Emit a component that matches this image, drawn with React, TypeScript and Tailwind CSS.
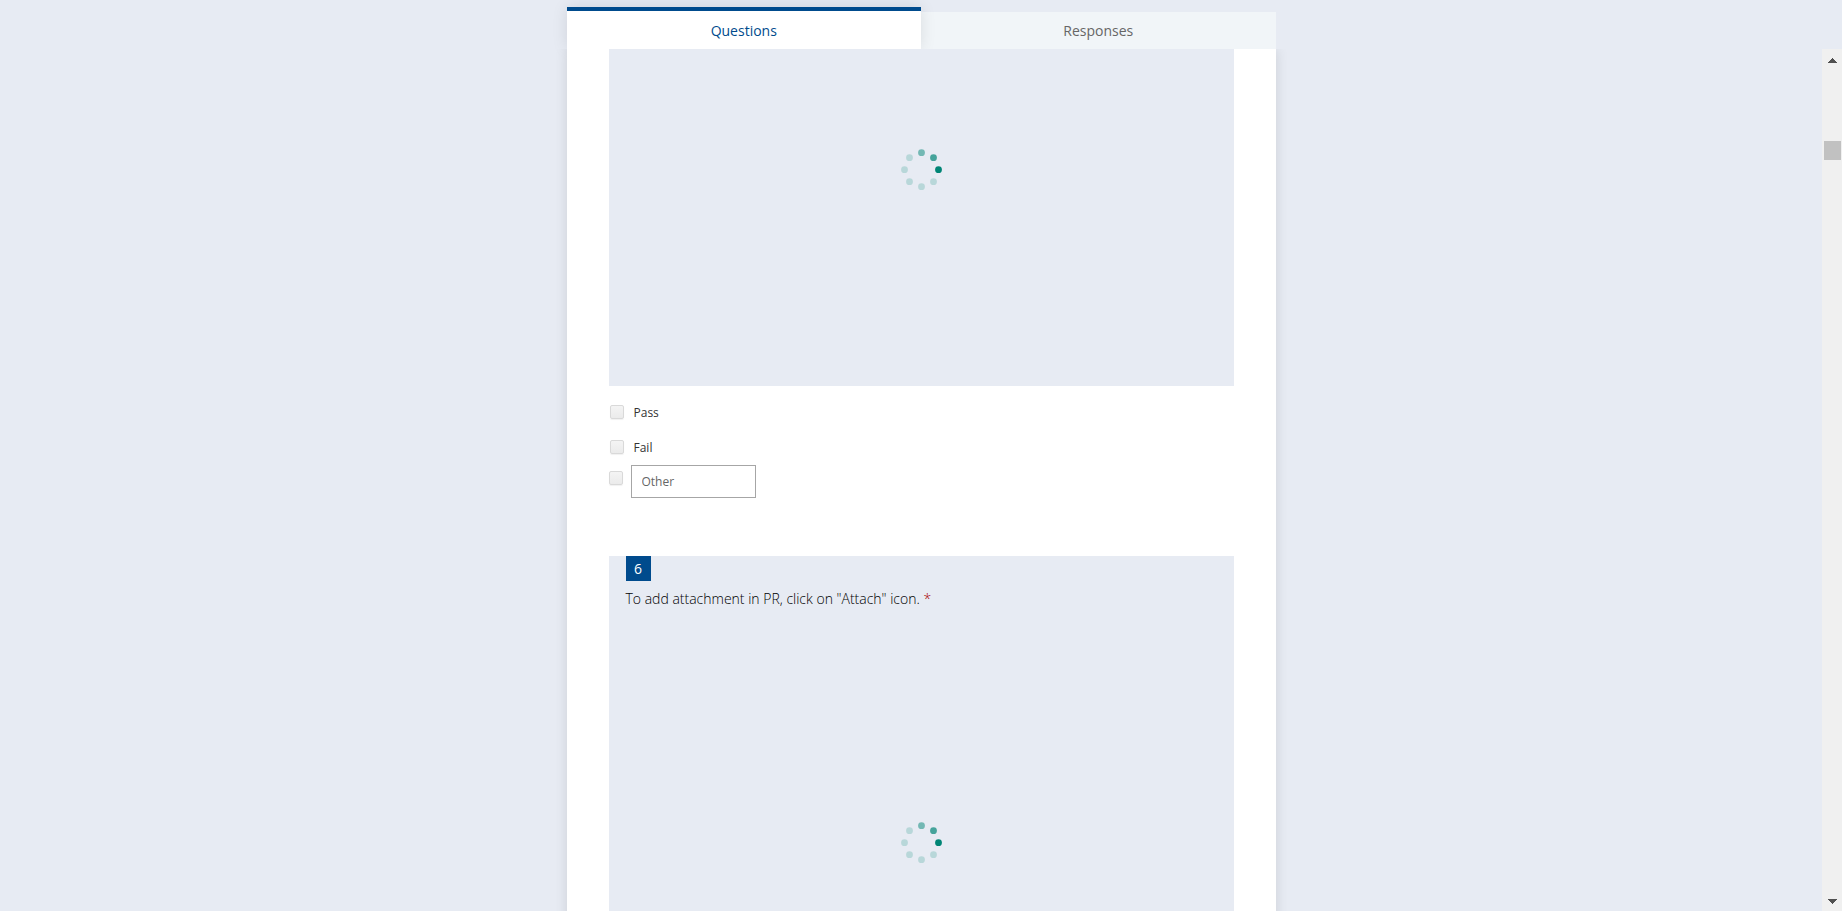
import React from "react";

const dots = [
  { x: 18, y: 1, opacity: 0.5 },
  { x: 30, y: 6, opacity: 0.7 },
  { x: 35, y: 18, opacity: 1 },
  { x: 30, y: 30, opacity: 0.2 },
  { x: 18, y: 35, opacity: 0.2 },
  { x: 6, y: 30, opacity: 0.2 },
  { x: 1, y: 18, opacity: 0.2 },
  { x: 6, y: 6, opacity: 0.2 },
];

function Spinner() {
  return (
    <svg role="img" aria-label="Loading" className="size-9 overflow-visible" viewBox="-0.5 0.3 36 36">
      {dots.map((d) => (
        <circle key={`${d.x}-${d.y}`} cx={d.x} cy={d.y} r={3.4} fill="#008575" fillOpacity={d.opacity} />
      ))}
    </svg>
  );
}

const checkboxClass =
  "size-3.5 shrink-0 appearance-none rounded-xs border border-[#d9d9d9] bg-linear-to-b from-[#f4f4f4] to-[#ebebeb] shadow-[0_1px_1px_rgba(0,0,0,0.06)]";

function Choice({ id, label }: { id: string; label: string }) {
  return (
    <div className="flex h-[35px] items-center gap-2.5 pl-px">
      <input id={id} type="checkbox" className={checkboxClass} />
      <label htmlFor={id} className="pt-0.5 text-xs text-[#333333]">
        {label}
      </label>
    </div>
  );
}

function Scrollbar() {
  return (
    <div aria-hidden="true" className="absolute inset-y-0 right-0 flex w-5 flex-col items-center bg-[#f0f0f0]">
      <svg className="mt-[9px] h-[5px] w-[9px]" viewBox="0 0 9 5" fill="#505050" shapeRendering="crispEdges">
        <path d="M4 0h1v1h1v1h1v1h1v1h1v1H0V4h1V3h1V2h1V1h1z" />
      </svg>
      <div className="mt-[78px] h-[19px] w-[17px] bg-[#c1c1c1]" />
      <svg className="mt-auto mb-[7px] h-[5px] w-[9px]" viewBox="0 0 9 5" fill="#505050" shapeRendering="crispEdges">
        <path d="M0 0h9v1H8v1H7v1H6v1H5v1H4V4H3V3H2V2H1V1H0z" />
      </svg>
    </div>
  );
}

export default function App() {
  return (
    <div className="flex h-screen flex-col overflow-hidden bg-[#e7ebf3] font-['Open_Sans','Noto_Sans',sans-serif]">
      <nav className="mx-auto flex w-full max-w-[709px] items-end pt-[7px]">
        <button
          type="button"
          className="z-10 h-[42px] flex-1 border-t-4 border-[#004b8d] bg-white pt-0.5 text-sm text-[#004b8d] shadow-[0_0_16px_rgba(0,0,0,0.1)]"
        >
          Questions
        </button>
        <button type="button" className="h-[37px] flex-1 bg-[#f1f5f8] pt-px text-sm text-[#666666]">
          Responses
        </button>
      </nav>

      <div className="relative z-20 min-h-0 flex-1 overflow-hidden">
        <main className="mx-auto w-full max-w-[709px] bg-white px-[42px] shadow-[0_0_12px_rgba(0,0,0,0.12)]">
          <section>
            <div className="flex justify-center bg-[#e7ebf3] pt-[103px] pb-[198px]">
              <Spinner />
            </div>
            <div className="pt-2">
              <Choice id="pass" label="Pass" />
              <Choice id="fail" label="Fail" />
              <div className="flex gap-2 pt-px">
                <input type="checkbox" aria-label="Other" className={`${checkboxClass} mt-1.5`} />
                <input
                  type="text"
                  aria-label="Other answer"
                  placeholder="Other"
                  className="h-[33px] w-[125px] border border-[#a6a6a6] bg-white px-2.5 text-xs text-[#333333] placeholder:text-[#666666]"
                />
              </div>
            </div>
          </section>

          <section className="mt-[58px] bg-[#e7ebf3]">
            <div className="px-[17px]">
              <div className="flex size-[25px] items-center justify-center bg-[#004b8d] text-sm text-white">6</div>
              <h2 className="mt-2 text-sm font-light text-black">
                To add attachment in PR, click on "Attach" icon. <span className="text-[#a80000]">*</span>
              </h2>
            </div>
            <div className="flex justify-center pt-[216px] pb-[198px]">
              <Spinner />
            </div>
          </section>
        </main>
        <Scrollbar />
      </div>
    </div>
  );
}
